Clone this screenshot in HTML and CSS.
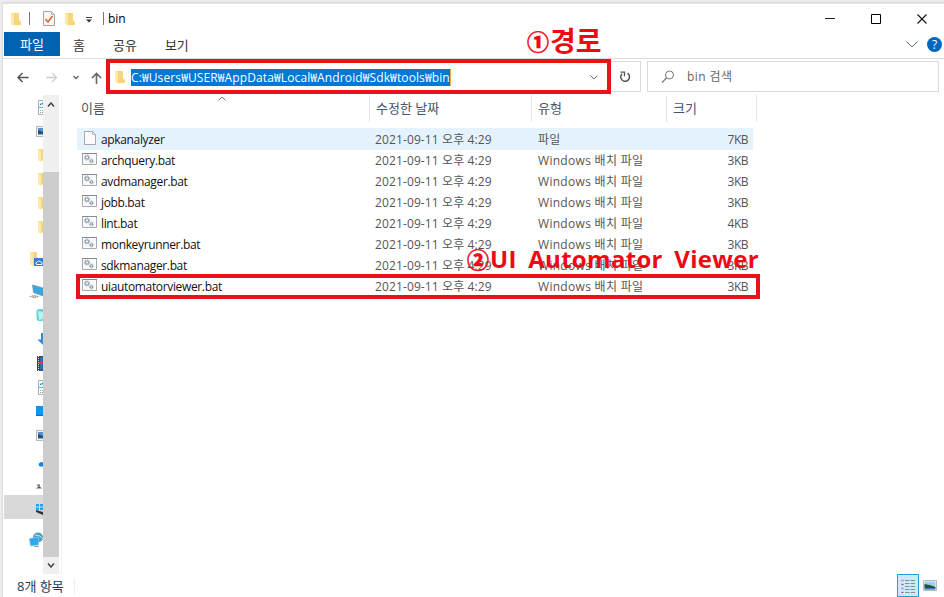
FILE: index.html
```html
<!DOCTYPE html>
<html lang="ko">
<head>
	<meta charset="UTF-8">
	<title>bin</title>
	<link rel="stylesheet" href="styles.css">
</head>
<body>
	<svg class="defs" width="0" height="0">
		<symbol id="folder" viewBox="0 0 10 14">
			<path d="M0 1h8v12l-8-1z" fill="#f5d77c"/>
			<path d="M0 1l3 1v12l-3-2z" fill="#ffe9a6"/>
			<path d="M8 8l2 2v3H3V9z" fill="#f7d477"/>
		</symbol>
		<symbol id="bat" viewBox="0 0 15 12">
			<path d="M.5.5h14v11H.5z" fill="#f8fafb" stroke="#a5abb0"/>
			<path d="M0 .5h15" stroke="#858b90"/>
			<circle cx="5" cy="4.500" r="1.700" fill="none" stroke="#9ba8b2" stroke-width="1.300"/>
			<circle cx="5" cy="4.500" r="2.700" fill="none" stroke="#9ba8b2" stroke-dasharray="1 1.100"/>
			<circle cx="9.500" cy="8" r="1.200" fill="none" stroke="#8494a0"/>
			<circle cx="9.500" cy="8" r="2" fill="none" stroke="#8494a0" stroke-width=".8" stroke-dasharray=".8 .8"/>
		</symbol>
		<symbol id="side-folder" viewBox="0 0 14 24">
			<path d="M9 6h5v12l-5-1z" fill="#f5d77c"/>
			<path d="M9 6l3 1v12l-3-2z" fill="#ffe9a6"/>
		</symbol>
		<symbol id="side-doc" viewBox="0 0 14 24">
			<path d="M14 5.500H9.500v14H14" fill="#fff" stroke="#a9adb0"/>
			<path d="M11 10.500l1-2 1 1 1-2" fill="none" stroke="#2787c9"/>
			<path d="M10 12.500h4" stroke="#58b2e4"/>
			<path d="M11 15.500h1m1 0h1m-3 2h1m1 0h1" stroke="#999"/>
		</symbol>
		<symbol id="side-pic" viewBox="0 0 14 24">
			<path d="M14 7.500H7.500v10H14" fill="#eef4f8" stroke="#b4b8bc"/>
			<path d="M9 9h5v7H9z" fill="#4d93d6"/>
			<path d="M9 11l5 2v3H9z" fill="#2a5364"/>
			<path d="M9 15h5v1H9z" fill="#6fb2d8"/>
		</symbol>
	</svg>
	<div class="window">
		<header class="title">
			<svg class="fold" width="10" height="14"><use href="#folder"/></svg>
			<i class="line"></i>
			<svg class="check" width="12" height="15" viewBox="0 0 12 15">
				<path d="M.5.5h8l3 3v11H.5z" fill="#f7f7f7" stroke="#a5a5a5"/>
				<path d="M8.500.5v3h3" fill="none" stroke="#b5b5b5"/>
				<path d="M2.500 8l2.500 3 4.500-6" fill="none" stroke="#e3662b" stroke-width="1.700"/>
			</svg>
			<svg class="fold2" width="10" height="14"><use href="#folder"/></svg>
			<svg class="drop" width="6" height="6" viewBox="0 0 6 6"><path d="M0 .5h6" stroke="#444"/><path d="M0 2.500h6l-3 3z" fill="#333"/></svg>
			<i class="line line2"></i>
			<span class="name">bin</span>
			<div class="controls">
				<svg width="12" height="12" viewBox="0 0 12 12"><path d="M1 5.500h10" stroke="#222"/></svg>
				<svg width="12" height="12" viewBox="0 0 12 12"><path d="M1.500 1.500h9v9h-9z" fill="none" stroke="#000"/></svg>
				<svg width="12" height="12" viewBox="0 0 12 12"><path d="M1.500 1.500l9 9m0-9l-9 9" stroke="#111" stroke-width="1.100"/></svg>
			</div>
		</header>
		<nav class="tabs">
			<a class="tab active">파일</a>
			<a class="tab home">홈</a>
			<a class="tab share">공유</a>
			<a class="tab view">보기</a>
			<svg class="expand" width="12" height="7" viewBox="0 0 12 7"><path d="M.5.5L6 6 11.500.5" fill="none" stroke="#666"/></svg>
			<span class="help">?</span>
		</nav>
		<div class="bar">
			<svg class="arrows" width="103" height="36" viewBox="0 0 103 36">
				<g fill="none">
					<path d="M25.500 18.500H15m4.500-4.500L15 18.500l4.500 4.500" stroke="#555" stroke-width="1.500"/>
					<path d="M43 18.500h10.500M49 14l4.500 4.500L49 23" stroke="#ccc" stroke-width="1.300"/>
					<path d="M70.500 17l2.500 2.500 2.500-2.500" stroke="#666" stroke-width="1.400"/>
					<path d="M93.500 25V14.500M89 19l4.500-4.500L98 19" stroke="#666" stroke-width="1.600"/>
				</g>
			</svg>
			<div class="address">
				<svg width="10" height="14"><use href="#folder"/></svg>
				<span class="path">C:₩Users₩USER₩AppData₩Local₩Android₩Sdk₩tools₩bin</span>
				<svg class="more" width="8" height="5" viewBox="0 0 8 5"><path d="M.5.5L4 4 7.500.5" fill="none" stroke="#666"/></svg>
			</div>
			<div class="refresh">
				<svg width="12" height="12" viewBox="0 0 12 12"><path d="M8.500 2.200A4.400 4.400 0 1 1 3 2.800" fill="none" stroke="#555" stroke-width="1.500"/><path d="M1.500 1.200h4v4" fill="none" stroke="#555" stroke-width="1.300"/></svg>
			</div>
			<div class="search">
				<svg width="14" height="14" viewBox="0 0 14 14"><circle cx="8.500" cy="5" r="4" fill="none" stroke="#777"/><path d="M5.500 8L1 12.500" stroke="#777" stroke-width="1.200"/></svg>
				<span>bin 검색</span>
			</div>
		</div>
		<div class="body">
			<aside class="side">
				<ul class="tree">
					<li><svg><use href="#side-doc"/></svg></li>
					<li><svg><use href="#side-pic"/></svg></li>
					<li><svg><use href="#side-folder"/></svg></li>
					<li><svg><use href="#side-folder"/></svg></li>
					<li><svg><use href="#side-folder"/></svg></li>
					<li><svg><use href="#side-folder"/></svg></li>
					<li class="gap9"><svg viewBox="0 0 14 24"><path d="M1 4h7v13l-7-1z" fill="#f5d77c"/><path d="M1 4l3 1v13l-3-2z" fill="#ffe9a6"/><path d="M5 10h9v8H5z" fill="#2e7fdc"/><path d="M7.500 16.500q-1.500-2 .5-2.300 1-2.700 3.500-.4 2 .2 1.500 2.700z" fill="none" stroke="#fff"/></svg></li>
					<li class="gap7"><svg viewBox="0 0 14 24"><path d="M3.500 6l10.500 3v8L4.500 13.500z" fill="#35a7e5" stroke="#6c8190" stroke-width=".6"/><path d="M0 17.500l6-2 5 2-5 2z" fill="#d0d3d6"/><path d="M1 17.500l6-1m-3 2l5-1" stroke="#858b90" stroke-dasharray="1 1"/></svg></li>
					<li><svg viewBox="0 0 14 24"><path d="M9 6h5v12H9l-1.500-2V8z" fill="#65d4d4"/><path d="M9 8l5 1v7l-4 1z" fill="#bdf0ef"/></svg></li>
					<li><svg viewBox="0 0 14 24"><path d="M12 6h2v12L8.500 12.500H12z" fill="#2b8ddb"/></svg></li>
					<li><svg viewBox="0 0 14 24"><path d="M8 5h6v15H8z" fill="#444"/><path d="M9.500 5v15" stroke="#ddd" stroke-dasharray="1 1"/><path d="M11 6h3v5h-3zm0 7h3v6h-3z" fill="#296bc1"/><path d="M10 12h4" stroke="#d94338" stroke-width="2"/></svg></li>
					<li><svg><use href="#side-doc"/></svg></li>
					<li><svg viewBox="0 0 14 24"><path d="M7 7h7v10H7z" fill="#1595e8"/><path d="M7 16.500h7" stroke="#0870be"/></svg></li>
					<li><svg><use href="#side-pic"/></svg></li>
					<li><svg viewBox="0 0 14 24"><path d="M14 19.500h-3a2 2 0 0 1-.5-3.500 3 3 0 0 1 3.500-.5z" fill="#0786e0"/></svg></li>
					<li><svg viewBox="0 0 14 24"><path d="M8 13.500h3v2l2 2.500H7l2-2z" fill="#555"/><path d="M9 15h2M8 17.500h5" stroke="#bbb"/></svg></li>
					<li class="selected"><svg viewBox="0 0 14 24"><path d="M7 9h3v2.500H7zm4 0h3v2.500h-3zm-4 3.500h3V15H7zm4 0h3V15h-3z" fill="#18a8e6"/><path d="M7 15l7 2v3l-7-3z" fill="#333"/></svg></li>
					<li class="gap8"><svg viewBox="0 0 14 24"><circle cx="9" cy="10.500" r="5" fill="#509fc0"/><path d="M6 8l5 1 3 3" stroke="#b9e5ed" fill="none"/><path d="M.3 11.500L9.500 10v8l-8 1z" fill="#2ea9eb" stroke="#8fd0ee" stroke-width=".6"/><path d="M5 19.500h5" stroke="#98a5ab"/></svg></li>
				</ul>
				<div class="scroll">
					<svg width="8" height="5" viewBox="0 0 8 5"><path d="M1 4.500L4 1l3 3.500" fill="none" stroke="#444" stroke-width="1.500"/></svg>
					<div class="thumb"></div>
					<svg width="8" height="5" viewBox="0 0 8 5"><path d="M1 .5L4 4 7 .5" fill="none" stroke="#444" stroke-width="1.500"/></svg>
				</div>
			</aside>
			<main class="files">
				<div class="head">
					<span>이름<svg class="sort" width="8" height="5" viewBox="0 0 8 5"><path d="M.5 4.500L4 1l3.500 3.500" fill="none" stroke="#777"/></svg></span>
					<span>수정한 날짜</span>
					<span>유형</span>
					<span>크기</span>
				</div>
				<ul class="list">
					<li class="hover"><svg class="file" width="12" height="14" viewBox="0 0 12 14"><path d="M.5.5h8l3 3v10H.5z" fill="#fbfbfb" stroke="#a9a9a9"/><path d="M8.500.5v3h3" fill="none" stroke="#bbb"/></svg><b>apkanalyzer</b><span>2021-09-11 오후 4:29</span><span class="type">파일</span><em>7KB</em></li>
					<li><svg width="15" height="12"><use href="#bat"/></svg><b>archquery.bat</b><span>2021-09-11 오후 4:29</span><span class="type">Windows 배치 파일</span><em>3KB</em></li>
					<li><svg width="15" height="12"><use href="#bat"/></svg><b>avdmanager.bat</b><span>2021-09-11 오후 4:29</span><span class="type">Windows 배치 파일</span><em>3KB</em></li>
					<li><svg width="15" height="12"><use href="#bat"/></svg><b>jobb.bat</b><span>2021-09-11 오후 4:29</span><span class="type">Windows 배치 파일</span><em>3KB</em></li>
					<li><svg width="15" height="12"><use href="#bat"/></svg><b>lint.bat</b><span>2021-09-11 오후 4:29</span><span class="type">Windows 배치 파일</span><em>4KB</em></li>
					<li><svg width="15" height="12"><use href="#bat"/></svg><b>monkeyrunner.bat</b><span>2021-09-11 오후 4:29</span><span class="type">Windows 배치 파일</span><em>3KB</em></li>
					<li><svg width="15" height="12"><use href="#bat"/></svg><b>sdkmanager.bat</b><span>2021-09-11 오후 4:29</span><span class="type">Windows 배치 파일</span><em>3KB</em></li>
					<li><svg width="15" height="12"><use href="#bat"/></svg><b>uiautomatorviewer.bat</b><span>2021-09-11 오후 4:29</span><span class="type">Windows 배치 파일</span><em>3KB</em></li>
				</ul>
			</main>
		</div>
		<footer class="status">
			<span class="count">8개 항목</span>
			<span class="mode">
				<svg width="14" height="14" viewBox="0 0 14 14"><path d="M0 1.500h3m-3 4h3m-3 4h3m-3 4h3" stroke="#b5a69f" stroke-width="1.500"/><path d="M1 5.500h1m-1 8h1" stroke="#c33"/><path d="M4 1.500h10M4 4.500h10M4 7.500h10M4 10.500h10M4 13.500h10" stroke="#7b959b" stroke-dasharray="4.500 1"/></svg>
			</span>
			<svg class="thumbs" width="14" height="11" viewBox="0 0 14 11"><path d="M.5.5h13v10H.5z" fill="#fff" stroke="#b9b9b9"/><path d="M1.500 1.500h11v8h-11z" fill="#9ccdf2"/><path d="M1.500 4l5 1 6 2v1h-11z" fill="#24533f"/><path d="M1.500 8h11v1.500h-11z" fill="#3978bc"/></svg>
		</footer>
	</div>
	<div class="box box1"></div>
	<div class="box box2"></div>
	<div class="note note1"><i>①</i>경로</div>
	<div class="note note2"><i>②</i>UI Automator Viewer</div>
</body>
</html>
```

FILE: styles.css
```css
*{margin: 0; padding: 0; box-sizing: border-box;}
li{list-style: none;}
i, em{font-style: normal;}
svg{display: block; flex: none;}
.defs{position: absolute;}
body{width: 944px; height: 597px; overflow: hidden; background: #ededed; padding: 3px 0 0 3px; font: 12px/20px "Open Sans", "Noto Sans CJK KR", sans-serif; color: #222; white-space: nowrap;}
.window{height: 594px; display: flex; flex-direction: column; background: #fff; border-top: 1px solid #e2e2e2; box-shadow: 0 0 2px #bbb;}

.title{height: 28px; display: flex; align-items: center; padding: 1px 8px 0;}
.line{width: 1px; height: 13px; background: #777; margin-left: 8px;}
.check{margin-left: 13px;}
.fold2{margin-left: 10px;}
.drop{margin: 2px 0 0 11px;}
.line2{margin-left: 11px;}
.name{margin-left: 4px; color: #000; letter-spacing: -.1px;}
.controls{display: flex; margin-left: auto; gap: 34px; padding-right: 8px;}

.tabs{height: 26px; display: flex; align-items: center; border-bottom: 1px solid #fff;}
.tab{line-height: 24px; font-size: 13px; color: #333;}
.tab.active{width: 56px; height: 24px; margin-left: 1px; align-self: flex-start; background: #0063b1; color: #fff; text-align: center;}
.home{margin-left: 13px;}
.share{margin-left: 28px;}
.view{margin-left: 28px;}
.expand{margin-left: auto;}
.help{width: 15px; height: 15px; margin: 0 2px 0 9px; border-radius: 50%; background: #0067c0; color: #fff; text-align: center; font-size: 12px; line-height: 15px;}

.bar{height: 37px; display: flex; border-top: 1px solid #dcdcdc;}
.address{width: 504px; display: flex; align-items: center; padding-left: 9px;}
.path{margin-left: 6px; height: 17px; line-height: 17px; background: #0078d7; color: #fff; border-right: 1px solid #f0a94a; letter-spacing: .12px;}
.more{margin: 0 12px 0 auto;}
.refresh{width: 31px; height: 31px; margin-top: 2px; border: 1px solid #dadada; border-left: 0; display: flex; align-items: center; justify-content: center;}
.search{width: 292px; height: 31px; margin: 2px 0 0 6px; border: 1px solid #dadada; display: flex; align-items: center; padding-left: 13px; color: #666; gap: 12px; letter-spacing: .4px;}

.body{height: 479px; display: flex;}
.side{width: 59px; display: flex; border-right: 1px solid #f0f0f0;}
.tree{width: 40px;}
.tree li{height: 24px; display: flex; justify-content: flex-end;}
.tree svg{width: 14px; height: 24px;}
.tree .gap9{margin-top: 9px;}
.tree .gap7{margin-top: 7px;}
.tree .gap8{margin-top: 8px;}
.tree .selected{background: #d9d9d9; margin-left: 1px;}
.scroll{width: 16px; background: #f0f0f0; display: flex; flex-direction: column; align-items: center; padding: 7px 0 6px;}
.thumb{width: 16px; height: 385px; margin: 65px 0 6px; background: #cdcdcd;}

.files{padding-left: 15px;}
.head{display: grid; grid-template-columns: 293px 162px 135px 90px; height: 26px; font-size: 13px; line-height: 27px; color: #44546e;}
.head span{border-right: 1px solid #e5e5e5; padding-left: 6px; position: relative;}
.head span:first-child{padding-left: 4px;}
.sort{position: absolute; left: 141px; top: 1px;}
.list{padding-top: 7px; width: 676px;}
.list li{height: 21px; display: grid; grid-template-columns: 24px 274px 162px 100px 1fr; line-height: 21px; color: #555; letter-spacing: .12px;}
.list svg{margin: 3px 0 0 5px;}
.list .file{margin: 3px 0 0 7px;}
.list b{font-weight: normal; color: #111; letter-spacing: -.35px;}
.list .type{padding-left: 1px; letter-spacing: .3px;}
.list em{text-align: right; padding-right: 5px; letter-spacing: -.5px;}
.list .hover{background: #e5f3ff; height: 22px; line-height: 23px;}

.status{height: 23px; display: flex; align-items: center; padding-left: 14px; color: #1e395b;}
.count{border-right: 1px solid #eee; padding-right: 10px; font-size: 13px; line-height: 16px;}
.mode{width: 22px; height: 23px; margin-left: auto; background: #cde8f8; border: 1px solid #26a0da; display: flex; align-items: center; justify-content: center;}
.thumbs{margin: 0 7px 0 4px;}

/* red marks over the window */
.box{position: absolute; border: 4px solid #ed1c24; border-color: #ea111b;}
.box1{left: 106px; top: 59px; width: 505px; height: 35px;}
.box2{left: 76px; top: 274px; width: 684px; height: 25px;}
.note{position: absolute; color: #f00914; font-weight: bold; display: flex; align-items: center;}
.note i{width: 23px; font-size: 22px; font-weight: 900; letter-spacing: 0; -webkit-text-stroke: .5px #f00914;}
.note1{left: 527px; top: 24px; font-size: 28px; line-height: 34px;}
.note2{left: 467px; top: 243px; font-size: 24px; line-height: 32px; letter-spacing: .3px; word-spacing: 5px;}
```
